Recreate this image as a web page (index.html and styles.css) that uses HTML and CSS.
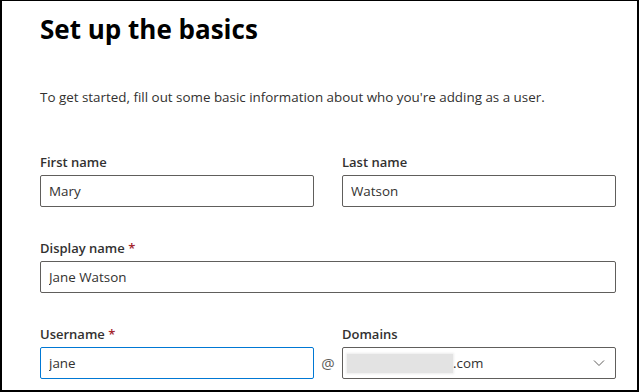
FILE: index.html
```html
<!DOCTYPE html>
<html lang="en">
<head>
  <meta charset="UTF-8">
  <title>Set up the basics</title>
  <link rel="stylesheet" href="styles.css">
</head>
<body>

<div class="frame">
  <h1 class="title">Set up the basics</h1>
  <p class="intro">To get started, fill out some basic information about who you're adding as a user.</p>

  <form class="form">
    <div class="field col-left">
      <label for="first">First name</label>
      <input id="first" class="box" type="text" value="Mary">
    </div>
    <div class="field col-right">
      <label for="last">Last name</label>
      <input id="last" class="box" type="text" value="Watson">
    </div>

    <div class="field col-full">
      <label for="display">Display name <span class="req">*</span></label>
      <input id="display" class="box" type="text" value="Jane Watson">
    </div>

    <div class="field col-left">
      <label for="user">Username <span class="req">*</span></label>
      <input id="user" class="box focused" type="text" value="jane">
    </div>
    <div class="at">@</div>
    <div class="field col-right">
      <label>Domains</label>
      <div class="box select">
        <span class="blur"></span>
        <span class="domain">.com</span>
        <svg class="chevron" width="12" height="8" viewBox="0 0 12 8">
          <polyline points="1,1.5 6,6.5 11,1.5" fill="none" stroke="#605e5c" stroke-width="1"/>
        </svg>
      </div>
    </div>
  </form>
</div>

</body>
</html>
```

FILE: styles.css
```css
html, body {
  margin: 0;
  height: 100%;
}
body {
  font-family: "Open Sans", "Noto Sans", sans-serif;
  color: #323130;
  background: #fff;
}
.frame {
  box-sizing: border-box;
  height: 392px;
  border: 2px solid #000;
  border-top-width: 1px;
  padding: 0 21px 0 38px;
  overflow: hidden;
}
.title {
  margin: 10px 0 0;
  font-size: 26px;
  line-height: 36px;
  font-weight: 700;
  color: #000;
}
.intro {
  margin: 40px 0 0;
  font-size: 13.4px;
  line-height: 20px;
}
.form {
  display: grid;
  grid-template-columns: 1fr 28px 1fr;
  row-gap: 32px;
  margin-top: 46px;
}
.field {
  display: flex;
  flex-direction: column;
}
.col-left { grid-column: 1; }
.col-right { grid-column: 3; }
.col-full { grid-column: 1 / -1; }
label {
  font-size: 13px;
  font-weight: 600;
  line-height: 18px;
  margin-bottom: 4px;
}
.req {
  color: #a4262c;
}
.box {
  box-sizing: border-box;
  height: 32px;
  border: 1px solid #605e5c;
  border-radius: 2px;
  padding: 0 8px;
  font-family: inherit;
  font-size: 13.4px;
  color: #323130;
  background: #fff;
}
.box.focused {
  border-color: #0078d4;
}
.at {
  grid-column: 2;
  align-self: end;
  height: 32px;
  line-height: 32px;
  text-align: center;
  font-size: 15px;
  color: #605e5c;
}
.select {
  display: flex;
  align-items: center;
  padding: 0 4px;
}
.blur {
  width: 106px;
  height: 19px;
  background: #e3e3e3;
  box-shadow: 0 0 2px 1px #ececec;
}
.domain {
  flex: 1;
}
.chevron {
  margin-right: 6px;
}
```
